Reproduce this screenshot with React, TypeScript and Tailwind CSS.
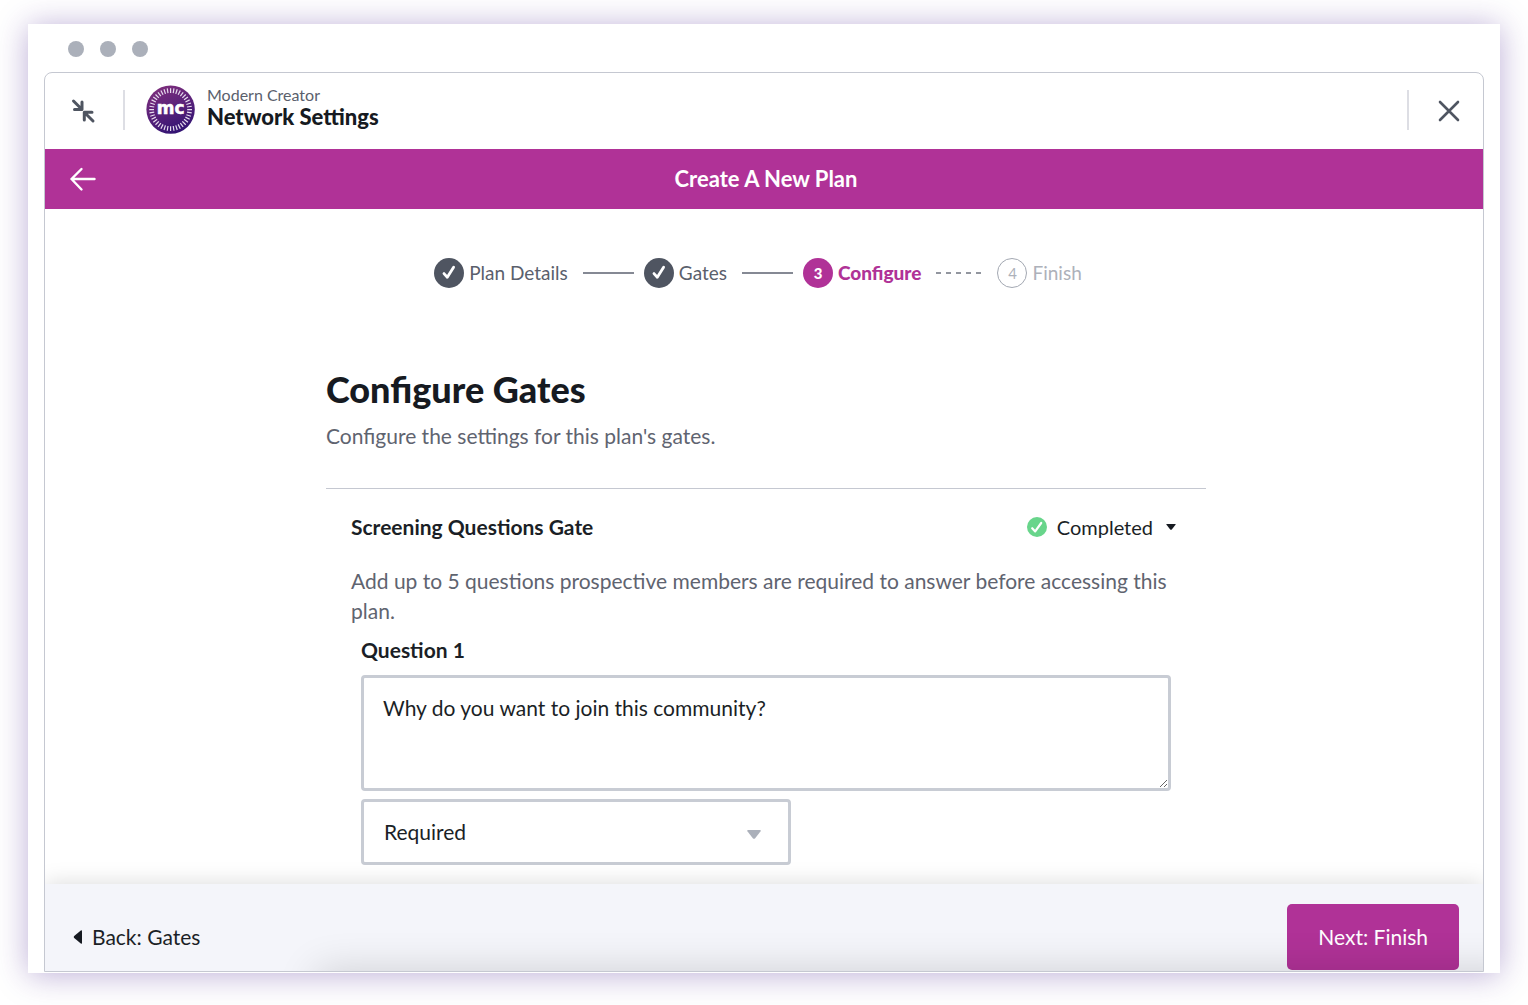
import { useState } from "react";

const steps = [
  { label: "Plan Details", state: "done" },
  { label: "Gates", state: "done" },
  { label: "Configure", state: "current" },
  { label: "Finish", state: "todo" },
];

const ticks = Array.from({ length: 40 }, (_, i) => i * 9);

function CheckIcon({ className }: { className?: string }) {
  return (
    <svg viewBox="0 0 30 30" className={className} fill="none" aria-hidden="true">
      <path
        d="M10 15.6 13.3 19.2 19.6 9.2"
        stroke="currentColor"
        strokeWidth="2.8"
        strokeLinecap="round"
        strokeLinejoin="round"
      />
    </svg>
  );
}

function CompletedIcon() {
  return (
    <svg viewBox="0 0 20 20" className="size-5" fill="none" aria-hidden="true">
      <circle cx="10" cy="10" r="10" fill="#68d58b" />
      <path
        d="M5.2 11.2 8.2 14.4 14.2 6"
        stroke="#fff"
        strokeWidth="2.2"
        strokeLinecap="round"
        strokeLinejoin="round"
      />
    </svg>
  );
}

function NetworkLogo() {
  return (
    <svg viewBox="0 0 50 50" className="size-[50px]" role="img" aria-label="Modern Creator">
      <defs>
        <linearGradient id="logo-bg" x1="0.3" y1="0" x2="0.7" y2="1">
          <stop offset="0" stopColor="#7d2e7c" />
          <stop offset="0.5" stopColor="#58217a" />
          <stop offset="1" stopColor="#2f1272" />
        </linearGradient>
      </defs>
      <circle cx="24.6" cy="24.6" r="24.2" fill="url(#logo-bg)" />
      {ticks.map((a) => (
        <line
          key={a}
          x1="24.6"
          y1="3.2"
          x2="24.6"
          y2="8"
          stroke="#e6dcee"
          strokeWidth="1.2"
          transform={`rotate(${a} 24.6 24.6)`}
        />
      ))}
      <text
        x="24.6"
        y="29"
        textAnchor="middle"
        fill="#fff"
        stroke="#fff"
        strokeWidth="0.5"
        fontSize="17"
        fontWeight="700"
        fontFamily="DejaVu Sans, sans-serif"
      >
        mc
      </text>
    </svg>
  );
}

function Stepper() {
  return (
    <ol className="mr-4 flex items-center justify-center text-[19px] leading-6">
      {steps.map((s, i) => (
        <li key={s.label} className="flex items-center">
          {i > 0 && s.state !== "todo" && (
            <span className="mr-[10px] ml-[15px] h-0.5 w-[51px] bg-[#858994]" />
          )}
          {s.state === "todo" && (
            <svg className="mr-[14px] ml-[15px] h-0.5 w-[47px]" aria-hidden="true">
              <path d="M0 1H47" stroke="#6f7480" strokeWidth="1.5" strokeDasharray="5 5" />
            </svg>
          )}
          {s.state === "done" && (
            <span className="size-[30px] rounded-full bg-[#4f5561] text-white">
              <CheckIcon className="size-full" />
            </span>
          )}
          {s.state === "current" && (
            <span className="flex size-[30px] items-center justify-center rounded-full bg-[#b03297] text-[15px] font-black text-white">
              {i + 1}
            </span>
          )}
          {s.state === "todo" && (
            <span className="flex size-[30px] items-center justify-center rounded-full border border-[#a3a8b2] text-[15px] text-[#adb1ba]">
              {i + 1}
            </span>
          )}
          <span
            className={
              s.state === "current"
                ? "ml-[5px] font-black text-[#b03297]"
                : s.state === "todo"
                  ? "ml-[5px] text-[#adb1ba]"
                  : "ml-[5px] text-[#5a606c]"
            }
          >
            {s.label}
          </span>
        </li>
      ))}
    </ol>
  );
}

export default function App() {
  const [question, setQuestion] = useState("Why do you want to join this community?");
  const [answer, setAnswer] = useState("Required");

  return (
    <div className="flex min-h-screen flex-col bg-white px-7 pt-6 pb-8 font-[Lato,sans-serif] text-[21px] leading-[30px] text-[#1b1f26]">
      <div className="flex flex-1 flex-col bg-white px-4 pb-px shadow-[0_2px_30px_rgba(70,30,140,0.36)]">
        <div className="flex h-12 items-center gap-4 px-6 pt-0.5">
          <span className="size-4 rounded-full bg-[#abb0ba]" />
          <span className="size-4 rounded-full bg-[#abb0ba]" />
          <span className="size-4 rounded-full bg-[#abb0ba]" />
        </div>

        <div className="relative flex flex-1 flex-col overflow-hidden rounded-t-lg border border-[#c5c8d1]">
          <header className="flex h-[76px] items-center pb-0.5">
            <button type="button" aria-label="Exit full screen" className="ml-6 text-[#4f5561]">
              <svg viewBox="0 0 28 28" className="size-7" fill="none" stroke="currentColor" strokeWidth="3" strokeLinecap="round" strokeLinejoin="round">
                <path d="M4.5 5 12.5 13M5.5 13.4H13V6" />
                <path d="M24 25 16 17M15.300 24V16.300H23" />
              </svg>
            </button>
            <span className="ml-[26px] h-10 w-0.5 bg-[#dddee4]" />
            <span className="ml-[21px]">
              <NetworkLogo />
            </span>
            <div className="ml-[11px] flex flex-col pb-1.5">
              <span className="text-[16px] leading-5 text-[#5a606c]">Modern Creator</span>
              <h1 className="text-[22px] leading-6 font-black text-[#161a21]">Network Settings</h1>
            </div>
            <span className="mr-[26px] ml-auto h-10 w-0.5 bg-[#dddee4]" />
            <button type="button" aria-label="Close" className="mr-5 text-[#4f5561]">
              <svg viewBox="0 0 28 28" className="size-7" fill="none" stroke="currentColor" strokeWidth="2.6" strokeLinecap="round">
                <path d="M5 6 23 24M23 6 5 24" />
              </svg>
            </button>
          </header>

          <div className="grid h-[60px] grid-cols-[1fr_auto_1fr] items-center bg-[#b03297] pl-6 text-white">
            <button type="button" aria-label="Back" className="w-7">
              <svg viewBox="0 0 28 28" className="size-7" fill="none" stroke="currentColor" strokeWidth="2.4" strokeLinecap="round" strokeLinejoin="round">
                <path d="M25.5 14H2.5M12.5 4 2.5 14 12.5 24.5" />
              </svg>
            </button>
            <h2 className="mr-5 text-[22px] font-bold">Create A New Plan</h2>
          </div>

          <main className="flex-1 pt-[49px] pb-[18px] pl-1">
            <Stepper />

            <div className="mx-auto mt-20 max-w-[880px]">
              <h2 className="text-[36px] leading-[42px] font-black text-[#161a21]">Configure Gates</h2>
              <p className="mt-[11px] text-[#5f6470]">Configure the settings for this plan's gates.</p>

              <section className="mt-[37px] border-t border-[#c5c8d1] px-[25px] pt-[23px]">
                <div className="flex items-center justify-between">
                  <h3 className="font-bold">Screening Questions Gate</h3>
                  <button type="button" className="flex items-center pr-[5px] text-[20px]">
                    <span className="mr-[10px]">
                      <CompletedIcon />
                    </span>
                    Completed
                    <svg viewBox="0 0 10 6" className="ml-[13px] h-1.5 w-2.5" aria-hidden="true">
                      <path d="M.8 0h8.4q.9 0 .3.8L5.8 5.4q-.8.8-1.6 0L.5.8Q-.1 0 .8 0Z" fill="#161a21" />
                    </svg>
                  </button>
                </div>
                <p className="mt-6 text-[#5f6470]">
                  Add up to 5 questions prospective members are required to answer before accessing this plan.
                </p>

                <div className="mt-[9px] flex flex-col px-[10px]">
                  <label htmlFor="question-1" className="font-bold">
                    Question 1
                  </label>
                  <textarea
                    id="question-1"
                    value={question}
                    onChange={(e) => setQuestion(e.target.value)}
                    className="mt-[10px] h-[116px] rounded border-[3px] border-[#c8ccd4] px-[19px] py-[15px]"
                  />
                  <div className="relative mt-2 w-[430px] max-w-full">
                    <select
                      aria-label="Answer requirement"
                      value={answer}
                      onChange={(e) => setAnswer(e.target.value)}
                      className="h-[66px] w-full appearance-none rounded border-[3px] border-[#c8ccd4] bg-white px-5"
                    >
                      <option>Required</option>
                      <option>Optional</option>
                    </select>
                    <svg viewBox="0 0 14 9" className="pointer-events-none absolute top-[31px] right-[30px] h-[9px] w-3.5" aria-hidden="true">
                      <path d="M1 0h12q1.4 0 .6 1.2L8 8.4q-1 .9-2 0L.4 1.2Q-.4 0 1 0Z" fill="#abb0ba" />
                    </svg>
                  </div>
                </div>
              </section>
            </div>
          </main>

          <footer className="relative flex items-end justify-between bg-[#f4f5fa] pt-5 pr-6 pb-px pl-7 shadow-[0_-2px_20px_rgba(0,0,0,0.13)]">
            <button type="button" className="flex h-[66px] items-center gap-[10px]">
              <svg viewBox="0 0 9 14" className="h-3.5 w-[9px]" aria-hidden="true">
                <path d="M9 1.2v11.6q0 1.4-1.2.6L1.2 8q-.9-1 0-2L7.8.6Q9-.2 9 1.2Z" fill="#161a21" />
              </svg>
              Back: Gates
            </button>
            <button type="button" className="h-[66px] rounded-[5px] bg-[#b03297] px-[31px] text-white">
              Next: Finish
            </button>
            {/* soft shade along the bottom edge */}
            <span className="pointer-events-none absolute right-0 bottom-0 left-52 h-10 overflow-hidden">
              <span className="absolute -right-10 -bottom-10 left-16 h-10 shadow-[0_0_40px_rgba(0,0,0,0.16)]" />
            </span>
          </footer>
        </div>
      </div>
    </div>
  );
}
